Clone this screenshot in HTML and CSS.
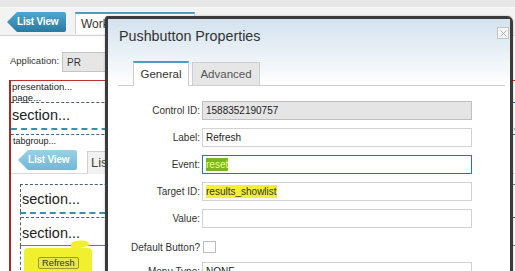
FILE: index.html
```html
<!DOCTYPE html>
<html>
<head>
<meta charset="utf-8">
<link rel="stylesheet" href="styles.css">
</head>
<body>
<div class="page">
  <div class="topstrip"></div>
  <div class="tabbar">
    <div class="lv">List View</div>
    <div class="tab">Work Item</div>
  </div>
  <div class="main">
    <div class="approw">
      <span class="applbl">Application:</span>
      <span class="appinput">PR</span>
    </div>
    <div class="redbox">
      <div class="small">presentation...</div>
      <div class="small pagelbl">page...</div>
      <div class="big sec0">section...</div>
      <div class="tabgroup">
        <div class="small tg">tabgroup...</div>
        <div class="itabbar">
          <div class="lv lv2">List View</div>
          <div class="itab">List</div>
        </div>
        <div class="sbox s1"><div class="big">section...</div></div>
        <div class="sbox s2"><div class="s2in"><div class="big">section...</div></div></div>
        <div class="sbox s3">
          <div class="hl"><span class="btn">Refresh</span></div>
        </div>
      </div>
    </div>
  </div>

  <div class="dialog">
    <div class="close">
      <svg width="9" height="9" viewBox="0 0 9 9"><path d="M1.5 1.5L7.5 7.5M7.5 1.5L1.5 7.5" stroke="#b0b0b0" stroke-width="1"/></svg>
    </div>
    <div class="dhead">
      <div class="dtitle">Pushbutton Properties</div>
      <div class="dtabs">
        <div class="dtab active">General</div>
        <div class="dtab">Advanced</div>
      </div>
    </div>
    <div class="form">
      <div class="frow"><span class="flbl">Control ID:</span><span class="finp ro">1588352190757</span></div>
      <div class="frow"><span class="flbl">Label:</span><span class="finp">Refresh</span></div>
      <div class="frow"><span class="flbl">Event:</span><span class="finp focus"><span class="hg">reset</span></span></div>
      <div class="frow"><span class="flbl">Target ID:</span><span class="finp"><span class="hy">results_showlist</span></span></div>
      <div class="frow"><span class="flbl">Value:</span><span class="finp"></span></div>
      <div class="frow crow"><span class="flbl">Default Button?</span><span class="chk"></span></div>
      <div class="frow mrow"><span class="flbl">Menu Type:</span><span class="finp">NONE</span></div>
    </div>
  </div>
</div>
</body>
</html>
```

FILE: styles.css
```css
html, body {
  margin: 0;
  padding: 0;
  overflow: hidden;
  background: #ffffff;
}
body {
  font-family: "Liberation Sans", Arial, sans-serif;
  color: #333;
}
.page {
  position: relative;
  width: 700px;
  height: 271px;
  overflow: hidden;
}
.topstrip {
  height: 7px;
  background: #e7e7e7;
  border-bottom: 1px solid #f8f8f8;
}
.tabbar {
  height: 27px;
  background: #f3f3f3;
  border-bottom: 1px solid #d2d2d2;
  display: flex;
  align-items: flex-start;
  padding-left: 7px;
}
.lv {
  margin-top: 4px;
  width: 49px;
  height: 20px;
  padding-left: 10px;
  line-height: 20px;
  font-size: 10px;
  font-weight: bold;
  color: #fff;
  background: linear-gradient(#4ea6cf, #2a7aa3);
  clip-path: polygon(10px 0, 100% 0, 100% 100%, 10px 100%, 0 50%);
  border-radius: 0 2px 2px 0;
  letter-spacing: -0.2px;
}
.tab {
  margin-left: 9px;
  margin-top: 4px;
  width: 120px;
  height: 22px;
  box-sizing: border-box;
  background: #fff;
  border-top: 2px solid #4a9cc4;
  border-left: 1px solid #d0d0d0;
  border-right: 1px solid #d0d0d0;
  font-size: 12px;
  line-height: 20px;
  padding-left: 5px;
  color: #333;
  margin-bottom: -1px;
}
.main {
  padding-top: 16px;
}
.approw {
  display: flex;
  align-items: center;
  margin-left: 10px;
  height: 20px;
}
.applbl {
  font-size: 9.5px;
  width: 52px;
  padding-bottom: 4px;
}
.appinput {
  box-sizing: border-box;
  width: 110px;
  height: 20px;
  background: #e6e6e6;
  border: 1px solid #c4c4c4;
  font-size: 10px;
  line-height: 18px;
  padding-left: 4px;
  padding-top: 1px;
}
.redbox {
  margin: 8px 0 0 9px;
  border-left: 2px solid #a52a2a;
  border-top: 1px solid #c03030;
  width: 600px;
  height: 200px;
}
.small {
  font-size: 9.5px;
  line-height: 11px;
  padding-left: 1px;
  color: #222;
}
.pagelbl {
  border-bottom: 1px dashed #4a6275;
  height: 10px;
}
.big {
  font-size: 14.5px;
  line-height: 18px;
  color: #222;
}
.sec0 {
  padding: 3px 0 4px 1px;
  border-bottom: 2px dashed #3a8fb0;
}
.tabgroup {
  margin-top: 4px;
  border-top: 1px dashed #4a6275;
}
.tg {
  padding-left: 2px;
  font-size: 9px;
  padding-top: 1px;
}
.itabbar {
  display: flex;
  align-items: flex-start;
  height: 24px;
  padding-left: 7px;
  border-bottom: 1px solid #d8d8d8;
  margin-top: 2px;
}
.lv2 {
  margin-top: 1px;
  background: linear-gradient(#9ad0e6, #72b7d6);
  padding-left: 10px;
  width: 49px;
}
.itab {
  margin-left: 10px;
  margin-top: 2px;
  width: 60px;
  height: 23px;
  box-sizing: border-box;
  background: #f2f2f2;
  border: 1px solid #d0d0d0;
  border-bottom: none;
  font-size: 13px;
  line-height: 22px;
  padding-left: 3px;
  color: #444;
}
.sbox {
  margin-left: 9px;
  border-left: 1px dashed #4a6275;
}
.s1 {
  margin-top: 10px;
  border-top: 1px dashed #4a6275;
  padding: 5px 0 4px 1px;
}
.s2 {
  border-top: 2px dashed #3a8fb0;
  border-bottom: 1px solid #3a8fb0;
}
.s2in {
  margin-top: 3px;
  border-top: 1px dashed #4a6275;
  padding: 6px 0 3px 1px;
}
.s3 {
  height: 40px;
  padding-left: 3px;
}
.hl {
  position: relative;
  display: inline-block;
  margin-top: 2px;
  padding: 4px 13px 4px 14px;
  background: #f0f02e;
  border-radius: 4px;
}
.hl::before {
  content: "";
  position: absolute;
  left: 47px;
  top: -8px;
  width: 18px;
  height: 8px;
  background: #f0f02e;
  border-radius: 20% 90% 0 0;
  transform: skewY(-15deg);
}
.btn {
  display: inline-block;
  font-size: 9.3px;
  line-height: 10px;
  padding: 0 3px;
  border: 1px solid #9a9a30;
  border-radius: 2px;
  background: #e6e84a;
  color: #333;
}

/* dialog */
.dialog {
  position: absolute;
  left: 105px;
  top: 16px;
  width: 402px;
  height: 300px;
  border: 3px solid #3c3c3c;
  border-radius: 3px 6px 0 0;
  background: #fff;
  box-shadow: 0 0 2px rgba(0,0,0,0.3);
}
.close {
  position: absolute;
  right: 1px;
  top: 8px;
  width: 10px;
  height: 10px;
  border: 1px solid #c4c4c4;
  background: #f4f7fa;
  display: flex;
  align-items: center;
  justify-content: center;
}
.dhead {
  background: linear-gradient(#d3e2ee, #ffffff 100%);
  padding-top: 8px;
  height: 58px;
  margin-bottom: 1px;
}
.dtitle {
  margin-left: 11px;
  font-size: 14.3px;
  line-height: 18px;
  color: #333;
}
.dtabs {
  display: flex;
  align-items: flex-end;
  margin: 16px 5px 0 10px;
  height: 24px;
  border-bottom: 1px solid #cfcfcf;
}
.dtab {
  box-sizing: border-box;
  height: 23px;
  margin-left: 3px;
  width: 68px;
  background: #e6e6e6;
  border: 1px solid #cdcdcd;
  border-bottom: none;
  font-size: 11.5px;
  line-height: 22px;
  text-align: center;
  color: #555;
}
.dtab.active {
  margin-left: 15px;
  width: 56px;
  height: 25px;
  margin-bottom: -1px;
  background: #fff;
  border-top: 2px solid #4a9cc4;
  color: #333;
  line-height: 22px;
}
.form {
  padding-top: 15px;
  display: flex;
  flex-direction: column;
  gap: 8px;
}
.frow {
  display: grid;
  grid-template-columns: 92px 270px;
  column-gap: 2px;
  align-items: center;
  height: 19px;
}
.flbl {
  text-align: right;
  font-size: 10px;
  color: #333;
}
.finp {
  box-sizing: border-box;
  height: 19px;
  border: 1px solid #d2d2d2;
  font-size: 10px;
  line-height: 17px;
  padding-left: 3px;
  color: #222;
  background: #fff;
}
.finp.ro {
  background: #e5e5e5;
  border-color: #bfbfbf;
}
.finp.focus {
  border-color: #2a7a8c;
}
.hg {
  background: #78b81c;
  color: #f0ff90;
  padding: 1px 0;
}
.hy {
  background: #f4ef30;
  color: #333;
  padding: 1px 0;
}
.crow {
  margin-top: 5px;
  height: 12px;
}
.chk {
  box-sizing: border-box;
  width: 13px;
  height: 12px;
  border: 1px solid #bcbcbc;
  background: #fff;
  margin-left: 1px;
}
.mrow {
  margin-top: 1px;
}
```
